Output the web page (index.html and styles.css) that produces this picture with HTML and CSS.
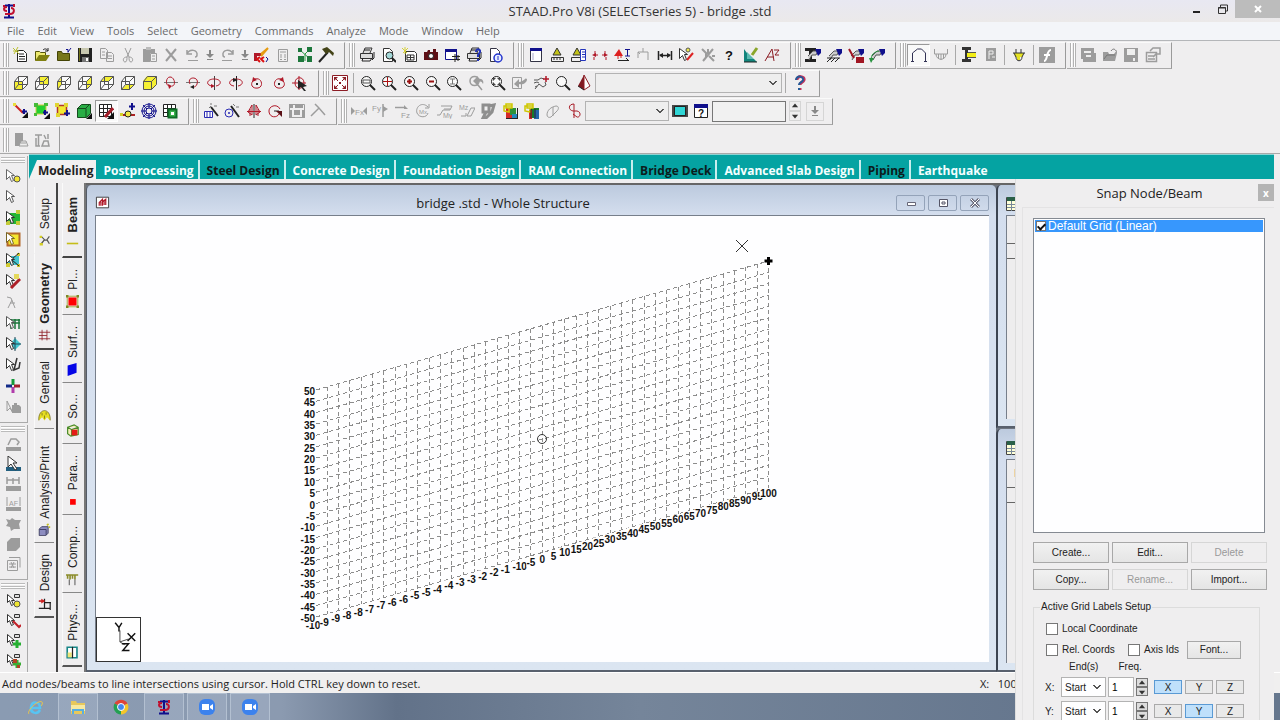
FILE: index.html
```
<!DOCTYPE html>
<html lang="en">
<head>
    <meta charset="UTF-8">
    <meta name="viewport" content="width=device-width, initial-scale=1.0">
    <title>STAAD.Pro V8i (SELECTseries 5) - bridge .std</title>
    <link rel="stylesheet" href="styles.css">
</head>
<body>
    <header class="titlebar">
        <span class="app-icon" data-icon="staad"></span>
        <h1>STAAD.Pro V8i (SELECTseries 5) - bridge .std</h1>
        <div class="window-buttons">
            <button aria-label="Minimize" data-icon="winMin"></button>
            <button aria-label="Restore" data-icon="winRestore"></button>
            <button class="close" aria-label="Close" data-icon="winClose"></button>
        </div>
    </header>

    <nav class="menubar">
        <a href="#">File</a>
        <a href="#">Edit</a>
        <a href="#">View</a>
        <a href="#">Tools</a>
        <a href="#">Select</a>
        <a href="#">Geometry</a>
        <a href="#">Commands</a>
        <a href="#">Analyze</a>
        <a href="#">Mode</a>
        <a href="#">Window</a>
        <a href="#">Help</a>
    </nav>

    <section class="toolbars">
        <div class="toolbar-row">
            <div class="toolbar w345" data-tools="newDoc open closeFile save copy cut paste del undo down redo down check calc nodes hammer"></div>
            <div class="toolbar w168" data-tools="print preview report camera tablePic printQ docQ"></div>
            <div class="toolbar w276" data-tools="win scale scaleDoc dimBeam dimNode frameG dimension selBeam crossG question ruler fontAZ"></div>
            <div class="toolbar w104" data-tools="handBeam handHatch handRed handArc"></div>
            <div class="toolbar w169" data-tools="portal* bucket | ibeam docG | plug | func"></div>
            <div class="toolbar w105" data-tools="saveG openG diskG handG"></div>
        </div>
        <div class="toolbar-row">
            <div class="toolbar w319" data-tools="cubeFront cubeBack cubeLeft cubeRight cubeTop cubeBottom cubeAll rotX rotX2 rotY rotY2 spin spin2 pick"></div>
            <div class="toolbar w500">
                <div class="tools w20" data-tools="fit"></div>
                <div class="tools w245" data-tools="| zoomWin zoomDyn zoomIn zoomOut zoomHalf zoomPrev zoomExt panG pan lens pyramid"></div>
                <select class="view-combo" aria-label="Saved view"><option></option></select>
                <div class="tools w28" data-tools="| help"></div>
            </div>
        </div>
        <div class="toolbar-row">
            <div class="toolbar w189" data-tools="addBeam addPlate addSurface addSolid gridTool* insertNode radial gridPlate"></div>
            <div class="toolbar w147" data-tools="wandGrid wandCircle mirror circRepeat tableG angleG"></div>
            <div class="toolbar w495">
                <div class="tools w237" data-tools="fx fy fz mx my mz platesG stress1 stress2 shapeG sCurve"></div>
                <select class="load-combo" aria-label="Load case"><option></option></select>
                <div class="tools w43" data-tools="monitor helpWin"></div>
                <input class="scale-box" type="text" aria-label="Scale">
                <div class="spin-pair">
                    <button aria-label="Increase" data-icon="up"></button>
                    <button aria-label="Decrease" data-icon="dn"></button>
                </div>
                <button class="apply" aria-label="Apply scale" data-icon="down"></button>
            </div>
        </div>
        <div class="toolbar-row last">
            <div class="toolbar w60" data-tools="docHand toolHand"></div>
        </div>
    </section>

    <div class="work">
        <aside class="side-tools">
            <div class="side-group" data-tools="curNode cur curPlate curSurface curSolid curBeam angle2 curGreen curCyan curHook crossColor curG"></div>
            <div class="side-group" data-tools="sg1 sg2 sg3 sg4 sg5 sg6 sg7"></div>
            <div class="side-group" data-tools="sn1 sn2 sn3 sn4"></div>
        </aside>

        <div class="main">
            <nav class="page-tabs">
                <a class="active" href="#">Modeling</a>
                <a href="#">Postprocessing</a>
                <a class="dark" href="#">Steel Design</a>
                <a href="#">Concrete Design</a>
                <a href="#">Foundation Design</a>
                <a href="#">RAM Connection</a>
                <a class="dark" href="#">Bridge Deck</a>
                <a href="#">Advanced Slab Design</a>
                <a class="dark" href="#">Piping</a>
                <a href="#">Earthquake</a>
            </nav>
            <div class="stage">
                <div class="vtabs outer">
                    <button><span>Setup</span><i data-icon="tSetup"></i></button>
                    <button class="active"><span>Geometry</span><i data-icon="tGeometry"></i></button>
                    <button><span>General</span><i data-icon="tGeneral"></i></button>
                    <button class="tall"><span>Analysis/Print</span><i data-icon="tAnalysis"></i></button>
                    <button class="end"><span>Design</span><i data-icon="tDesign"></i></button>
                </div>
                <div class="vtabs inner">
                    <button class="active"><span>Beam</span><i data-icon="tBeam"></i></button>
                    <button><span>Pl...</span><i data-icon="tPlate"></i></button>
                    <button><span>Surf...</span><i data-icon="tSurf"></i></button>
                    <button><span>So...</span><i data-icon="tSolid"></i></button>
                    <button><span>Para...</span><i data-icon="tPara"></i></button>
                    <button><span>Comp...</span><i data-icon="tComp"></i></button>
                    <button class="end"><span>Phys...</span><i data-icon="tPhys"></i></button>
                </div>

                <div class="mdi">
                    <section class="child view">
                        <header class="child-title">
                            <span class="child-icon" data-icon="structure"></span>
                            <h2>bridge .std - Whole Structure</h2>
                            <div class="child-buttons">
                                <button aria-label="Minimize" data-icon="cMin"></button>
                                <button aria-label="Maximize" data-icon="cMax"></button>
                                <button aria-label="Close" data-icon="cClose"></button>
                            </div>
                        </header>
                        <div class="client">
                            <svg id="grid" viewBox="96 216 893 446" role="img" aria-label="Snap grid"></svg>
                            <svg class="axes" viewBox="0 0 45 45" role="img" aria-label="Axis orientation">
                                <path d="M24 13v12l9-3M24 25l5 3" />
                                <path d="M19 5l4 5l3-5M23 10v4M32 16l8 8M40 16l-8 8M26 27h7l-6 7h7" class="letters" />
                            </svg>
                        </div>
                    </section>
                    <div class="child-stack">
                        <section class="child table-window">
                            <span class="child-icon" data-icon="table"></span>
                            <div class="client"><div class="cell head"></div><div class="cell"></div></div>
                        </section>
                        <section class="child table-window">
                            <span class="child-icon" data-icon="table"></span>
                            <div class="client"><div class="cell head">E</div><div class="cell"></div></div>
                        </section>
                    </div>
                </div>
            </div>
        </div>
    </div>

    <footer class="statusbar">
        <span class="hint">Add nodes/beams to line intersections using cursor. Hold CTRL key down to reset.</span>
        <span class="coords">X:&nbsp;&nbsp; 100</span>
    </footer>

    <nav class="taskbar">
        <button aria-label="Internet Explorer" data-icon="ie"></button>
        <button class="open" aria-label="File Explorer" data-icon="explorer"></button>
        <button aria-label="Chrome" data-icon="chrome"></button>
        <button class="open" aria-label="STAAD.Pro" data-icon="staad"></button>
        <button class="open" aria-label="Zoom" data-icon="zoomApp"></button>
        <button class="open" aria-label="Zoom Meeting" data-icon="zoomApp"></button>
    </nav>

    <section class="dialog">
        <header class="dialog-title">
            <h2>Snap Node/Beam</h2>
            <button aria-label="Close dialog">x</button>
        </header>
        <div class="dialog-body">
            <div class="grid-list">
                <label class="selected"><input type="checkbox" checked>Default Grid (Linear)</label>
            </div>
            <div class="actions">
                <button>Create...</button>
                <button>Edit...</button>
                <button disabled>Delete</button>
                <button>Copy...</button>
                <button disabled>Rename...</button>
                <button>Import...</button>
            </div>
            <fieldset>
                <legend>Active Grid Labels Setup</legend>
                <div class="check-row">
                    <label><input type="checkbox">Local Coordinate</label>
                </div>
                <div class="check-row">
                    <label class="rel"><input type="checkbox">Rel. Coords</label>
                    <label><input type="checkbox">Axis Ids</label>
                    <button class="font-button">Font...</button>
                </div>
                <div class="label-heads"><span>End(s)</span><span>Freq.</span></div>
                <div class="axis-row">
                    <label for="end-x">X:</label>
                    <select id="end-x"><option>Start</option></select>
                    <input type="text" value="1" aria-label="X frequency">
                    <div class="spinner"><button aria-label="More" data-icon="up"></button><button aria-label="Less" data-icon="dn"></button></div>
                    <div class="axis-buttons"><button class="on">X</button><button>Y</button><button>Z</button></div>
                </div>
                <div class="axis-row">
                    <label for="end-y">Y:</label>
                    <select id="end-y"><option>Start</option></select>
                    <input type="text" value="1" aria-label="Y frequency">
                    <div class="spinner"><button aria-label="More" data-icon="up"></button><button aria-label="Less" data-icon="dn"></button></div>
                    <div class="axis-buttons"><button>X</button><button class="on">Y</button><button>Z</button></div>
                </div>
            </fieldset>
        </div>
    </section>

    <script src="script.js"></script>
</body>
</html>
```
FILE: styles.css
```
*,
*::before {
    box-sizing: border-box;
}
body {
    margin: 0;
    height: 100vh;
    overflow: hidden;
    display: flex;
    flex-direction: column;
    background: #efeeef;
    color: #222;
    font-family: "Open Sans", "Noto Sans", sans-serif;
    font-size: 11px;
}
button {
    padding: 0;
    border: 0;
    background: none;
    color: inherit;
    font: inherit;
    display: flex;
    align-items: center;
    justify-content: center;
}
h1,
h2 {
    margin: 0;
    font-weight: normal;
}
a {
    color: inherit;
    text-decoration: none;
}
svg {
    display: block;
}
[data-icon] svg {
    width: 16px;
    height: 16px;
}

/* title bar and menu */
.titlebar {
    display: grid;
    grid-template-columns: 96px 1fr 96px;
    height: 22px;
    flex: none;
    background: linear-gradient(#e8e8f2, #ebe9e9);
}
.app-icon {
    padding: 3px 0 0 1px;
}
.titlebar h1 {
    text-align: center;
    font-size: 13px;
    line-height: 22px;
    color: #333;
}
.window-buttons {
    display: flex;
    justify-content: flex-end;
    height: 18px;
}
.window-buttons button {
    width: 25px;
}
.window-buttons .close {
    width: 45px;
    background: #bcbcbc;
}
.menubar {
    display: flex;
    gap: 13px;
    flex: none;
    height: 19px;
    padding-left: 7px;
    background: #f3f5f9;
    border-bottom: 1px solid #b4b6b9;
    color: #6a6a6a;
    line-height: 18px;
}

/* toolbars */
.toolbars {
    flex: none;
    border-bottom: 1px solid #a9a9a9;
}
.toolbar-row {
    display: flex;
    gap: 1px;
    height: 28px;
    padding-top: 1px;
}
.toolbar {
    display: flex;
    align-items: center;
    height: 27px;
    padding: 0 7px 1px 0;
    border-right: 1px solid #9a9a9a;
    border-bottom: 1px solid #a9a9a9;
    border-top: 1px solid #fafafa;
}
.toolbar-row.last .toolbar {
    border-bottom: 0;
}
.toolbar::before {
    content: "";
    flex: none;
    width: 6px;
    height: 24px;
    margin: 0 1px 0 3px;
    border: solid #b2b2b2;
    border-width: 0 1px;
    background: linear-gradient(90deg, #fff 1px, #efeeef 1px, #efeeef 2px, #b2b2b2 2px, #b2b2b2 3px, #fff 3px);
}
.tools {
    display: flex;
    align-items: center;
    flex: none;
}
.tool {
    flex: 5 1 0;
    min-width: 0;
    height: 22px;
}
.tool.narrow {
    flex-grow: 3;
}
.tool.pressed {
    background: #f9f9f9;
    border: 1px solid;
    border-color: #999 #fff #fff #999;
}
.tool svg {
    flex: none;
}
.sep {
    flex: none;
    width: 1px;
    height: 20px;
    margin: 0 3px;
    background: #a9a9a9;
}
.w345 { width: 345px; }
.w168 { width: 168px; }
.w276 { width: 276px; }
.w104 { width: 104px; }
.w169 { width: 169px; }
.w105 { width: 105px; }
.w319 { width: 319px; }
.w500 { width: 500px; }
.w20 { width: 20px; }
.w28 { width: 28px; }
.w245 { width: 245px; }
.w189 { width: 189px; }
.w147 { width: 147px; }
.w495 { width: 495px; }
.w237 { width: 237px; }
.w43 { width: 43px; }
.w60 { width: 60px; }
select {
    appearance: none;
    background-color: #eee;
    background-image: linear-gradient(45deg, transparent 50%, #555 50%, #555 75%, transparent 75%), linear-gradient(-45deg, transparent 50%, #555 50%, #555 75%, transparent 75%);
    background-size: 4px 5px;
    background-position: right 8px center, right 4px center;
    background-repeat: no-repeat;
    border: 1px solid #b3b3b3;
    border-radius: 0;
    color: #222;
    height: 20px;
}
.view-combo {
    width: 187px;
}
.load-combo {
    width: 84px;
}
.scale-box {
    width: 74px;
    height: 21px;
    border: 1px solid #777;
    background: #f1f1f1;
}
.spin-pair {
    width: 12px;
    margin: 0 5px 0 3px;
}
.spin-pair button {
    width: 100%;
    height: 10px;
    border: 1px solid #d5d5d5;
}
.apply {
    width: 18px;
    height: 19px;
    border: 1px solid #d5d5d5;
}
.spin-pair svg,
.spinner svg {
    width: 10px;
    height: 10px;
}

/* work area */
.work {
    flex: 1;
    min-height: 0;
    display: flex;
}
.side-tools {
    width: 29px;
    flex: none;
    padding-top: 2px;
    overflow: hidden;
}
.side-group {
    display: flex;
    flex-direction: column;
    width: 28px;
    padding-bottom: 5px;
    margin-bottom: 2px;
    border-right: 1px solid #aaa;
    border-bottom: 1px solid #aaa;
}
.side-group::before {
    content: "";
    flex: none;
    width: 24px;
    height: 6px;
    margin: 1px 1px 2px;
    border: solid #bbb;
    border-width: 1px 0;
    background: linear-gradient(#fff 1px, #efeeef 1px, #efeeef 2px, #bbb 2px, #bbb 3px, #fff 3px);
}
.side-group .tool {
    flex: none;
    width: 26px;
    height: 20px;
}
.side-group:first-child .tool {
    height: 21px;
}
.main {
    flex: 1;
    min-width: 0;
    display: flex;
    flex-direction: column;
}
.page-tabs {
    display: flex;
    align-items: flex-end;
    flex: none;
    height: 25px;
    margin-right: 6px;
    background: #05a3a2;
    border-top: 1px solid #8fd3d3;
    color: #f4ffff;
    font-size: 12px;
    font-weight: bold;
}
.page-tabs a {
    height: 19px;
    padding: 0 4px 0 7px;
    border-right: 2px solid #c9eeee;
    line-height: 21px;
    white-space: nowrap;
}
.page-tabs a:last-child {
    border: 0;
}
.page-tabs .dark {
    color: #0c1c1c;
}
.page-tabs .active {
    padding: 0 3px 0 9px;
    border: 0;
    background: #f2f1f1;
    clip-path: polygon(8px 0, 100% 0, 100% 100%, 0 100%);
    color: #222;
}
.stage {
    flex: 1;
    min-height: 0;
    display: flex;
    padding-top: 4px;
}
.vtabs {
    flex: none;
    display: flex;
    flex-direction: column;
    align-items: stretch;
    overflow: hidden;
    border-right: 2px solid #444;
    font-family: "Liberation Sans", sans-serif;
    font-size: 12px;
    line-height: 14px;
}
.vtabs.outer {
    width: 29px;
    padding: 4px 2px 0 5px;
}
.vtabs.inner {
    width: 28px;
    padding: 0 2px 0 4px;
    border-right: 2px solid #777;
}
.vtabs button {
    flex: none;
    flex-direction: column;
    justify-content: flex-end;
    gap: 5px;
    padding: 11px 0 6px;
    border-bottom: 1px solid #888;
    border-left: 1px solid #fafafa;
}
.vtabs.outer button:first-child {
    border-bottom-color: transparent;
}
.vtabs span {
    writing-mode: vertical-rl;
    transform: rotate(180deg);
}
.vtabs button svg {
    width: 13px;
    height: 13px;
}
.vtabs .active {
    padding-top: 9px;
    font-size: 13px;
    font-weight: bold;
    border-bottom: 2px solid #444;
}
.vtabs .tall {
    padding-top: 17px;
}
.vtabs.inner .active {
    padding-top: 14px;
}
.vtabs .end {
    border-bottom: 2px solid #555;
}

/* child windows */
.mdi {
    flex: 1;
    min-width: 0;
    display: flex;
    margin-right: 6px;
    border-top: 2px solid #666;
    background: #6d747f;
}
.child {
    background: linear-gradient(#bccade, #d4deee 30px, #dbe5f1);
    border-left: 1px solid #555c68;
    border-bottom: 2px solid #59616e;
}
.view {
    flex: 1;
    min-width: 0;
    display: flex;
    flex-direction: column;
    padding: 0 7px 8px 8px;
    border-radius: 5px 5px 0 0;
}
.child-title {
    flex: none;
    display: grid;
    grid-template-columns: 15px 1fr 93px;
    align-items: center;
    height: 30px;
    padding-top: 5px;
}
.child-title h2 {
    text-align: center;
    font-size: 13px;
    line-height: 18px;
}
.child-title .child-icon svg {
    width: 15px;
    height: 13px;
}
.child-buttons {
    display: flex;
    gap: 3px;
}
.child-buttons button {
    width: 29px;
    height: 16px;
    border: 1px solid #94a3b9;
    border-radius: 2px;
}
.client {
    background: #fefeff;
    border: solid #777f8b;
    border-width: 1px 0 0 1px;
}
.view .client {
    position: relative;
    flex: 1;
    min-height: 0;
}
#grid {
    width: 100%;
    height: 100%;
}
#grid .lines line {
    stroke: #8c8c8c;
    stroke-dasharray: 4 3;
    shape-rendering: crispEdges;
}
#grid .mark {
    stroke: #333;
    fill: none;
}
#grid .node {
    stroke: #000;
    stroke-width: 3px;
}
#grid rect {
    fill: #fefeff;
}
#grid text {
    font: bold 10px "Liberation Sans", sans-serif;
    fill: #111;
    text-anchor: middle;
}
#grid .end {
    text-anchor: end;
}
.axes {
    position: absolute;
    left: 0;
    bottom: 0;
    width: 45px;
    height: 45px;
    background: #fff;
    border: 1px solid #333;
    fill: none;
    stroke: #444;
}
.axes .letters {
    stroke: #111;
    stroke-width: 1.5;
}
.child-stack {
    width: 278px;
    flex: none;
    display: flex;
    flex-direction: column;
    gap: 1px;
}
.table-window {
    flex: 1;
    display: flex;
    flex-direction: column;
    padding: 11px 0 7px 8px;
    border-left: 2px solid #3c4451;
    border-radius: 5px 0 0 0;
}
.table-window .child-icon {
    height: 19px;
}
.table-window .client {
    flex: 1;
    background: #eeedee;
    font-weight: bold;
}
.cell {
    height: 15px;
    border-bottom: 1px solid #666;
}
.cell.head {
    height: 28px;
    padding: 5px 7px;
}

/* status bar and task bar */
.statusbar {
    flex: none;
    display: flex;
    height: 21px;
    padding: 0 2px;
    line-height: 22px;
    background: #f0efef;
    border-top: 1px solid #fff;
}
.hint {
    width: 978px;
}
.taskbar {
    flex: none;
    display: flex;
    gap: 3px;
    height: 27px;
    padding-left: 15px;
    background: linear-gradient(90deg, #8a9bb2, #8b9ab0 22%, #627289 31%, #75859a 50%, #66778e 80%);
}
.taskbar button {
    width: 40px;
}
.taskbar .open {
    background: rgba(190, 205, 225, 0.25);
    border: 1px solid #b3c0d1;
    border-bottom: 0;
}

/* snap dialog */
.dialog {
    position: absolute;
    top: 179px;
    right: 6px;
    bottom: 0;
    width: 259px;
    overflow: hidden;
    background: #efeeef;
    border-left: 1px solid #ddd;
    font-family: "Liberation Sans", sans-serif;
    font-size: 10px;
}
.dialog-title {
    display: flex;
    height: 28px;
    padding-left: 25px;
    font-family: "Open Sans", "Noto Sans", sans-serif;
}
.dialog-title h2 {
    flex: 1;
    text-align: center;
    font-size: 13px;
    line-height: 28px;
}
.dialog-title button {
    width: 16px;
    height: 17px;
    margin-top: 5px;
    background: #b4b4b4;
    color: #fff;
    font-weight: bold;
    font-size: 10px;
}
.dialog-body {
    margin: 0 0 0 6px;
    padding: 10px 7px 0 10px;
    border: solid #e4e3e4;
    border-width: 1px 0 0 1px;
}
.grid-list {
    height: 315px;
    margin-right: 2px;
    padding: 1px;
    border: 1px solid #858a92;
    background: #fefeff;
}
.dialog label {
    display: flex;
    align-items: center;
    white-space: nowrap;
}
.grid-list .selected {
    height: 12px;
    padding-left: 1px;
    background: #3797fd;
    color: #fff;
    font-size: 12px;
    line-height: 12px;
}
input[type="checkbox"] {
    appearance: none;
    flex: none;
    display: grid;
    place-items: center;
    width: 12px;
    height: 12px;
    margin: 0 4px 0 0;
    border: 1px solid #777;
    background: #fff;
}
.grid-list input[type="checkbox"] {
    width: 10px;
    height: 10px;
    margin-right: 2px;
}
input[type="checkbox"]:checked::before {
    content: "";
    width: 5px;
    height: 8px;
    border: solid #111;
    border-width: 0 2px 2px 0;
    transform: rotate(45deg);
}
.actions {
    display: grid;
    grid-template-columns: repeat(3, 1fr);
    gap: 6px 3px;
    margin-top: 9px;
}
.actions button,
.font-button {
    height: 21px;
    background: linear-gradient(#f1f1f1, #e5e5e5);
    border: 1px solid #a8a8a8;
}
.actions button:disabled {
    border-color: #d6d6d6;
    background: none;
    color: #999;
}
fieldset {
    min-width: 0;
    margin: 11px 7px 0 0;
    padding: 2px 8px 10px 12px;
    border: 1px solid #dcdcdc;
}
legend {
    margin-left: -6px;
    padding: 0 1px;
    line-height: 12px;
}
.check-row {
    display: flex;
    align-items: center;
    height: 21px;
    margin-top: 3px;
}
.check-row + .check-row {
    margin-top: 0;
}
.check-row .rel {
    width: 82px;
}
.font-button {
    width: 54px;
    height: 18px;
    margin-left: auto;
    margin-right: 10px;
}
.label-heads {
    display: flex;
    gap: 20px;
    padding-left: 23px;
    line-height: 14px;
}
.axis-row {
    display: flex;
    align-items: center;
    height: 20px;
    margin: 3px 0 4px -1px;
}
.axis-row label {
    width: 16px;
}
.axis-row select {
    width: 45px;
    padding: 0 3px;
    background-color: #fefeff;
    font: inherit;
}
.axis-row input {
    width: 26px;
    height: 20px;
    margin: 0 2px;
    padding: 0 3px;
    border: 1px solid #b3b3b3;
    font: inherit;
}
.spinner {
    width: 12px;
    margin-right: 6px;
}
.spinner button {
    width: 12px;
    height: 9px;
    background: #ddd;
    border: 1px solid #777;
}
.axis-buttons {
    display: flex;
    gap: 3px;
}
.axis-buttons button {
    width: 28px;
    height: 14px;
    background: #e9e9e9;
    border: 1px solid #aaa;
}
.axis-buttons .on {
    background: #bfe0fb;
    border-color: #5a9ad4;
}
```
FILE: script.js
```
// Small helpers shared by the 16x16 icons
const p = (d, stroke = '#222', fill = 'none', w = 1) =>
    `<path d="${d}" stroke="${stroke}" fill="${fill}" stroke-width="${w}"/>`;
const f = (d, fill = '#222') => `<path d="${d}" fill="${fill}"/>`;
const t = (x, y, s, fill, size = 8) =>
    `<text x="${x}" y="${y}" font-size="${size}" font-family="Liberation Sans, sans-serif" fill="${fill}">${s}</text>`;
const G = '#9c9c9c';
const R = '#b01828';
const N = '#10108c';

const cube = (face) => f('M1 14v-8l4-5h9v9l-5 5z', '#fafafa') + f(face, '#f5f032') + p('M1.5 6.5h8v8h-8zM1.5 6.5l4-5h9l-5 5M14.5 1.5v8l-5 5M5.5 1.5v8h9M5.5 9.5l-4 5', '#555');
const lens = (inner = '') => `<circle cx="6.5" cy="6.5" r="5" stroke="#222" fill="#fafafa"/>` + p('M10 10l5 5', '#222', 'none', 2) + inner;
const cursor = (c = '#333') => p('M1.500 1.500v10l3-3l2 5l2-1l-2-5h3z', c, '#fff');
const hand = p('M3 9l5-5h5l-2 4h-4l-3 5', '#555', '#ccc') + f('M10 2h6v4l-3 3z', N);
const print = p('M4 6l2-5h7l-2 5M1.500 6.500h12v5h-12z', '#333', '#ddd') + p('M4 11l-1 3h8l2-3M5 3h6M15 5v6l-2 2');
const paper = (c = '#333', fill = '#fff') => p('M3.500 1.500h6l3 3v10h-9z', c, fill);
const smallCursor = p('M2.500 1.500v8l2-2l2 5l2-1l-2-4h3z', '#333', '#fff');
const bar = p('M9.500 1.500h5v3h-5z', '#333', '#ddd');

const icons = {
    staad: p('M4 2.500h8M3 14.500h10M8 1v13', N, 'none', 2) + p('M6 4c-4 0-4 4 0 4M10 5c4 0 4 6-1 6h-5M3 2v2M13 1v3', '#c01030', 'none', 2),
    winMin: f('M3 10h7v2h-7z'),
    winRestore: p('M3.500 6.500h7v6h-7zM5.500 6v-2h7v6h-2M3 7h8', '#333'),
    winClose: p('M5 5l6 6M11 5l-6 6', '#fff', 'none', 2),
    cMin: p('M4.500 7.500h8v3h-8z', '#667', '#fff'),
    cMax: p('M4.500 4.500h8v7h-8zM7 7h3v2h-3z', '#556', '#fff'),
    cClose: p('M4 4l8 8M12 4l-8 8', '#667', 'none', 3) + p('M4 4l8 8M12 4l-8 8', '#fff'),
    structure: p('M.5 1.500h15v13h-15z', '#222', '#fff') + p('M4 12v-4l4-4v8M8 7l4-3v7M10 11v-5M6 12v-5', R, 'none', 1.500),
    table: p('M.5 1.500h15v13h-15z', '#444', '#ffffd8') + f('M1 1h15v4h-15z', '#2a6048') + p('M1 8.500h15M1 11.500h15M5.500 5v10M10.500 5v10', '#789'),

    newDoc: p('M4.500 3.500h6l3 3v8h-9z', '#222', '#fff') + p('M6 7h5M6 9.500h6M6 12h6') + p('M0 1l6 6M5 0l-4 7M0 4h6', '#b9bf30'),
    open: p('M1.500 13.500v-9h4l1 1h5v3', '#55550a', '#eeea70') + f('M1 14l4-6h11l-4 6z', '#808010') + p('M9 3c2-2 4-1 5 1M14 1v3h-3'),
    closeFile: p('M1.500 13.500v-9h4l1 2h7v7z', '#444405', '#77771a') + p('M10 2.500h2v3M12 5l3-4', N),
    save: f('M1 1h14v14h-14z') + f('M4 1h8v6h-8z', '#c8c8b0') + f('M2 1h1v13h-1z', '#74741a') + f('M5 10h7v5h-7z', '#777') + f('M9 11h2v3h-2z', '#fff'),
    copy: p('M1.500 1.500h5l2 2v8h-7zM7.500 5.500h5l2 2v7h-7zM3 5h3M3 8h3M9 9h4M9 11.500h4', G),
    cut: p('M5 1l4 9M11 1l-4 9', G) + p('M7 10c-5 0-4 5-2 5s2-3 2-5M9 10c5 0 4 5 2 5s-2-3-2-5', G),
    paste: f('M1 2h12v4h-5v9h-7z', G) + p('M8.500 6.500h6v8h-6zM10 9h3M10 12h3', G, '#eee') + f('M4 0h5v3h-5z', '#bbb'),
    del: p('M3 2l10 12M13 2l-10 12', G, 'none', 2),
    undo: p('M2 3v4h5M2 7c3-6 11-4 10 1c0 1-1 2-2 2', G, 'none', 1.500) + p('M3 13.500h10', G, 'none', 1),
    redo: p('M14 3v4h-5M14 7c-3-6-11-4-10 1c0 1 1 2 2 2', G, 'none', 1.500) + p('M3 13.500h10', G),
    down: f('M7 3h2v4h3l-4 4l-4-4h3zM5 12h6v1h-6z', '#888'),
    up: f('M8 4l5 6h-10z', '#333'),
    dn: f('M3 6h10l-5 6z', '#333'),
    check: f('M0 6h7v3h-4v5h-3z', R) + p('M14 1l-7 8M14 1l-7 6', '#e69b10', 'none', 2) + p('M6 10l-3 2l3 3M10 10l-3 2l3 3', '#d11', 'none', 2) + p('M12 10l2 2l-2 3', N),
    calc: p('M3.500 2.500h9v12h-9zM5 5h6M5 8h2M9 8h2M5 10h2M9 10h2M5 12.500h2M9 12.500h2', G),
    nodes: p('M3 3l10 9M8 7l5-5M8 7v7', '#2c9b45') + f('M1 1h4v4h-4zM10 0h5v5h-5zM1 9h6v6h-6zM10 9h5v6h-5z', '#1d783c'),
    hammer: p('M10 5l-9 10', '#222', 'none', 2) + f('M4 2l5-2l7 6l-1 3l-4-4l-3 2z', '#444418'),
    print,
    preview: paper() + `<circle cx="9.500" cy="8.500" r="3.500" stroke="#222" fill="#a4d8d8"/>` + p('M12 11l4 4', '#222', 'none', 2),
    report: p('M3.500 4.500h9l2 2v8h-11zM5 8h7v5h-7zM5 10.500h7M8.500 8v5', '#333', '#fff') + p('M0 1l5 5M6 1l-5 5M3 0v7', '#d6d038'),
    camera: f('M1 5h3l1-2h2v2h3v-3h3v3h2v8h-14z', '#5e1016') + `<circle cx="8" cy="9" r="2.500" fill="#fff" stroke="#222"/>`,
    tablePic: p('M1.500 2.500h11v10h-11z', N, '#fff') + f('M1 2h12v3h-12z', N) + p('M8 9.500h8M8 12.500h8M11 7v8M14 8v6', '#222'),
    printQ: print + p('M10 5c0-4 5-3 4 0l-2 3v2M12 12v2', '#2233bb', 'none', 2),
    docQ: paper('#334') + `<circle cx="11" cy="11" r="4" fill="#e7edff" stroke="#2233cc" stroke-width="1.500"/>` + p('M11 9v4', '#23c'),
    win: p('M2.500 1.500h11v13h-11z', '#334', '#fff') + f('M2 1h12v3h-12z', N) + p('M5 6v7', '#aac'),
    scale: f('M8 1l4 7h-8z', '#c2c218') + p('M8 1l4 7h-8zM2.500 10.500h12v4h-12zM5 10v3M8 10v3M11 10v3', '#333'),
    scaleDoc: f('M6 1l4 7h-8z', '#c2c218') + p('M6 1l4 7h-8zM.5 10.500h9v4h-9z', '#333') + p('M9.500 2.500h5v11h-5zM11 5h3M11 7.500h3M11 10h3', '#2233bb', '#fff'),
    dimBeam: p('M3 4v3M13 4v3M2 10v3M14 10v3', R) + p('M2 8h4M10 8h4', R) + f('M0 8l4-2v4zM16 8l-4-2v4z', R),
    dimNode: f('M0 9l5-7l4 7z', '#dd2020') + p('M4 9v3M7 8v3', '#d22') + p('M11 2.500h5M13.500 2v7M11 9h5', N) + p('M4 13.500h11M12 11l3 3', '#222'),
    frameG: p('M3 5h10v8M3 5l2 2M3 5v6M8 1v4', G),
    dimension: p('M1.500 4v9M14.500 4v9M3 8.500h10', '#222', 'none', 1.500) + f('M2 8l4-2v5zM14 8l-4-2v5z'),
    selBeam: cursor() + p('M15 6l-6 7', '#d22', 'none', 2) + `<circle cx="10" cy="3" r="2" fill="#eee84c" stroke="#555"/>`,
    crossG: p('M13 2l-10 12M2 2l4 4v4M8 2v5M12 9h3M9 9l5 5', G, 'none', 2),
    question: t(4, 13, '<tspan font-weight="bold">?</tspan>', '#111', 13),
    ruler: f('M1 2v13h13l-3-3h-7v-6z', '#12847b') + f('M4 5v7h7z', '#5ab9b0') + p('M14 1l-5 7', '#8aa62b', 'none', 3) + p('M1 15h13', '#222'),
    fontAZ: p('M1 14l7-12l2 12M3 10h7M10 3h5l-4 5h4', '#8c1d25'),
    handBeam: f('M0 1h11v3h-4v8h4v3h-11v-3h4v-8h-4z') + hand,
    handHatch: hand + p('M1 11h13M1 15l4-4M5 15l4-4M9 15l4-4'),
    handRed: hand + p('M1 2l5 9M9 11h6v4h-6z', '#a01522', '#a01522', 2),
    handArc: hand + p('M2 14c0-7 3-9 8-10', '#299340') + f('M0 11h5l-3 5z', '#299340'),
    portal: p('M1.500 14v-8l5-4h4l4 4v8M0 14.500h3M13 14.500h3', '#335', 'none', 1),
    bucket: p('M1.500 2v5h13v-5M3 7c0 7 10 7 10 0M5.500 7v5M8 7v6M10.500 7v5', G),
    ibeam: f('M1 0h9v3h-3v9h3v3h-9v-3h3v-9h-3z', '#333') + p('M7 5.500h8M7 10.500h8', '#555', 'none', 1) + f('M6 6h9v4h-9z', '#f3ee18'),
    docG: f('M3 1h10v13h-10z', G) + p('M6 4h4v3h-4zM6 7v5M9 10h3', '#eee'),
    plug: f('M3 6h10l-2 4h-2v3h-3v-3h-2z', '#e6e323') + p('M2 6h12M3 6l2 4c0 5 6 5 6 0l2-4M5 2v4M10 2v4', '#333'),
    func: f('M0 0h16v16h-16z', G) + p('M5 14c4 0 2-11 7-11M5 8h6', '#fff', 'none', 2),
    saveG: f('M1 1h13v5h2v9h-13v-3h-2z', G) + f('M4 4h7v2h-7zM6 8h5v2h-5z', '#eee'),
    openG: f('M1 14v-9h5l1 2h5l3-4v3l-2 8z', G) + p('M9 4c2-3 4-2 5 0M2 12l3-4h8', '#777'),
    diskG: f('M1 1h14v14h-14z', G) + f('M4 2h8v6h-8zM10 11h2v3h-2z', '#eee'),
    handG: p('M1.500 5.500h10v9h-10zM3 9h7M3 12h7M5 4l3-3h7v6h-4l-3 3', G, 'none', 1.500),

    cubeFront: cube('M2 7h7v7h-7z'),
    cubeBack: cube('M6 2h8v7h-8z'),
    cubeLeft: cube('M2 7l4-5v7l-4 5z'),
    cubeRight: cube('M10 6l4-4v7l-4 5z'),
    cubeTop: cube('M2 6l4-4h8l-4 4z'),
    cubeBottom: cube('M2 14l4-4h8l-4 4z'),
    cubeAll: f('M1 14v-8l4-5h9v9l-5 5z', '#f5f032') + p('M1.500 6.500h8v8h-8zM1.500 6.500l4-5h9l-5 5M14.500 1.500v8l-5 5', '#555'),
    rotX: p('M1 7.500h14', '#777') + p('M6 11c-4-1-3-9 1-9c5 0 6 9 2 9', R) + f('M5 9l4 2l-3 3z', R),
    rotX2: p('M1 7.500h14', '#777') + p('M5 9c-4-8 10-8 7 0c-1 3-3 3-4 3', R) + f('M9 10v4l-4-2z', '#222'),
    rotY: p('M8.500 1v14', '#444') + p('M6 11c-7-1-5-7 2-7c8 0 8 6 2 7', R) + f('M5 9l4 2l-4 2z', R),
    rotY2: p('M8.500 1v14', '#222') + p('M6 11c-7-1-5-7 2-7c8 0 8 6 2 7', R) + f('M5 3l5 2l-5 2z'),
    spin: p('M6 4c7-2 9 8 3 9c-6 1-8-4-5-7', R) + f('M4 2l4 3l-5 2z', R) + f('M7 8h2v2h-2z'),
    spin2: p('M10 4c-7-2-9 8-3 9c6 1 8-4 5-7', R) + f('M12 2l-4 3l5 2z', R) + f('M7 8h2v2h-2z'),
    pick: p('M7 1v14M0 8h14M3 8c0-7 9-7 9 0s-9 7-9 0', R) + f('M6 5l9 6l-4 1l3 4h-2l-3-4l-3 2z'),
    fit: p('M.5.5h15v15h-15z', '#8c1d25', '#fff') + p('M3 3l3 3M13 3l-3 3M3 13l3-3M13 13l-3-3', '#8c1d25') + f('M2 2h4l-4 4zM14 2v4l-4-4zM2 14v-4l4 4zM14 14h-4l4-4zM7 7h2v2h-2z', '#8c1d25'),
    zoomWin: lens(p('M3 5h7v3h-7z', '#555')),
    zoomDyn: lens(p('M2 6.500h9M6.500 2v9', '#a11')),
    zoomIn: lens(p('M4 6.500h5M6.500 4v5', '#911', 'none', 2)),
    zoomOut: lens(p('M4 6.500h5', '#911', 'none', 2)),
    zoomHalf: lens(p('M4 4h5M4 9h5M6.500 4v5', '#777')),
    zoomPrev: p('M11 6c0-6-9-6-9 0s9 6 9 0M10 10l4 5', G, 'none', 1.500) + f('M5 6l5-5v3c5-1 6 3 5 5c-1-3-3-3-5-2v4z', G),
    zoomExt: lens(f('M3 3h3l-3 3zM10 3v3l-3-3zM3 10v-3l3 3zM10 10h-3l3-3z', '#444')),
    panG: p('M1.500 2.500h9v11h-9z', G) + f('M3 9l5-5v3c6-1 6-5 8-3c0 4-4 6-8 5v4z', G),
    pan: p('M1 5h4l3-2l3 1M1 8l3-1l2 1M2 14l4-5l4 3l3-2l-1-3M4 11l-2 1', '#555') + p('M13 1v6M10 4h6', R, 'none', 1.500),
    lens: lens(),
    pyramid: f('M8 0l-6 11l6 4z', '#811820') + p('M8 0l6 11l-6 4z', '#8c1d25', '#fff') + p('M2 11l6 4'),
    help: p('M5 5c0-5 8-4 7 0c-1 3-4 2-4 5M8 13v2', '#c3305b', 'none', 3) + p('M4 5c0-5 8-4 7 0c-1 3-4 2-4 5M7 13v2', '#245a98', 'none', 2),

    addBeam: p('M2 2l8 8', '#c22', 'none', 2) + f('M0 0h3v3h-3z', '#e8dd3a') + p('M11 6v5M9 8.500h5', N, 'none', 2) + f('M15 9v6h-6z', '#111'),
    addPlate: p('M2 2h10v9h-10z', '#d0cc42', '#24cf30') + f('M0 0h4v4h-4zM10 0h4v3h-4zM0 10h3v3h-3z', '#45bb38') + p('M11 7v5M9 9.500h5', N, 'none', 2) + f('M16 10v6h-6z', '#111'),
    addSurface: p('M2.500 2.500h9v9h-9z', '#b3362b', '#f2e832', 1.500) + f('M0 0h4v4h-4zM9 0h4v4h-4zM1 10h4v4h-4z', '#e1d632') + p('M12 7v6M9 10.500h6', N, 'none', 2),
    addSolid: p('M1.500 5.500l4-4h9v9l-4 4h-9zM1 5.500h9v9M10 5l4-4', '#154c1d', '#29ad45') + f('M16 10v6h-6z', '#111'),
    gridTool: p('M1.500 1.500h12v12h-12zM5.500 1v13M9.500 1v13M1 5.500h13M1 9.500h13', '#222', '#fff') + p('M15 5l-8 9', '#a31c28', 'none', 3) + f('M16 9v7h-7z', '#111'),
    insertNode: p('M0 12h5M10 12h5', '#a22', 'none', 2) + `<circle cx="8" cy="11" r="3" fill="#f0e742" stroke="#222"/>` + p('M12 0v7M9 3.500h6', N, 'none', 2) + f('M0 10h3v3h-3z', '#d4ce25'),
    radial: `<circle cx="8" cy="8" r="7" stroke="${N}" fill="none"/><circle cx="8" cy="8" r="3" stroke="${N}" fill="none"/><circle cx="8" cy="8" r="5" stroke="${N}" fill="none"/>` + p('M8 0v5M8 11v5M0 8h5M11 8h5M2 2l4 4M10 10l4 4M14 2l-4 4M2 14l4-4', N),
    gridPlate: p('M1.500 1.500h12v12h-12zM5.500 1v12M9.500 1v12M1 5.500h12M1 9.500h12', '#222', '#fff') + p('M6.500 6.500h8v8h-8z', '#0c6c25', '#38b24c', 2) + f('M9 9h3v3h-3z', '#fff'),
    wandGrid: p('M1.500 8.500h8v6h-8zM4 8v6M7 8v6', '#2a2ab3', '#fff') + p('M8 4l7 9', '#222', 'none', 2) + p('M6 5l2-2M8 0v2M11 3h3', '#777'),
    wandCircle: `<circle cx="5" cy="10" r="4" fill="none" stroke="#2a2ab3"/><circle cx="5" cy="10" r="1" fill="#2a2ab3"/>` + p('M7 3l8 11', '#222', 'none', 2) + p('M9 1l2 2M12 4h3', '#777'),
    mirror: p('M8 1v14', '#222', 'none', 1) + p('M6 2v10l-4-3zM10 2v10l4-3zM1 8.500h14M4 6v7M12 6v7', R),
    circRepeat: p('M13 6c-3-6-12-3-11 3c1 6 8 6 10 2', R) + p('M7 8h5', '#222') + f('M9 8h6v6z', '#5a1016'),
    tableG: f('M0 1h4v4h-4zM6 1h8v4h-8zM0 7h3v8h-3zM5 7h6v5h-6zM13 7h3v8h-3z', G) + p('M.5 1.500h15v13h-15z', G),
    angleG: p('M1 13l8-8l6 7M9 5l-4-4', G, 'none', 1.500),
    fx: f('M0 4l4 4l-4 4zM16 4l-4 4l4 4z', G) + t(4, 12, 'Fx', G),
    fy: t(0, 8, 'Fy', G) + p('M11 1v13', G, 'none', 1.500) + f('M11 3l5 3l-5 3z', G),
    fz: p('M1 4.500h10', G, 'none', 1.500) + f('M10 2l4 4h-4z', G) + t(7, 15, 'Fz', G),
    mx: p('M13 4c-6-6-13 0-11 6c2 5 10 5 11 0M14 1v4h-4', G) + t(4, 11, 'Mx', G, 6),
    my: p('M4 3h11l-2 4h-7l-3 5h-3M7 6h6', G) + t(6, 15, 'My', G, 7),
    mz: t(0, 7, 'Mz', G, 7) + p('M2 13h5v-3M8 13l4-8h4l-4 8z', G),
    platesG: p('M3 2h6v7h-6zM9 3l5-1l-2 7l-6 6h-3l3-6', '#8e8e8e', 'none', 3),
    stress1: f('M4 5h10v10h-10z', '#d42b28') + f('M8 5h6v7h-6z', '#2c9138') + f('M10 11h5v4h-5z', '#28b') + p('M4 1h6v4h-6zM7 5v4l-5-1v-5h8', '#cfc700', 'none', 1.500) + p('M4 15.500h12M15.500 5v10'),
    stress2: f('M8 5h8v10h-8z', '#167a2c') + f('M6 7h3v9h-3z', '#d42b28') + f('M11 7h5v9h-5z', '#26a') + p('M4 1h6v4h-6zM7 5v4l-5-1v-5h8', '#cfc700', 'none', 1.500) + p('M8 6v9M12 6v9'),
    shapeG: p('M2 12c0-5 4-8 9-9c3 0 3 3 1 5l-6 6c-2 1-4 0-4-2zM8 4v9', G),
    sCurve: p('M8 1c-6 0-6 6-1 7h4c5 1 3 7 0 6l-4-3M8 1v14', '#a91d28'),
    monitor: f('M0 2h16v12h-16z', '#484848') + f('M3 4h10v8h-10z', '#30d5d5') + p('M2.500 3.500h11v9h-11z'),
    helpWin: p('M1.500 1.500h13v13h-13z', '#222', '#fff') + f('M1 1h14v4h-14z', N) + t(5, 14, '<tspan font-weight="bold">?</tspan>', '#111', 10),
    docHand: f('M2 1h8v13h-8z', G) + p('M6 14l2-5h5l2 5zM8 11h5', G, '#eee'),
    toolHand: p('M1 3h7M4.500 3v11M2 6v8h4M8 14l2-5h4l1 5zM10 3l2 4M14 2v5', G, 'none', 1.500),

    curNode: cursor('#666') + `<circle cx="12" cy="11" r="3" fill="#f2e634" stroke="#555"/>`,
    cur: cursor('#555'),
    curPlate: f('M3 3h12v11h-12z', '#23b633') + f('M11 0h4v4h-4zM1 11h4v4h-4zM11 11h4v4h-4z', '#c2ca38') + cursor(),
    curSurface: p('M2.500 2.500h12v12h-12z', '#b4682a', '#f4e730', 2) + cursor('#766523'),
    curSolid: f('M3 4h11v9h-11z', '#42c4cf') + f('M12 1h3v3h-3zM1 11h4v4h-4zM12 12h3v3h-3z', '#d1cb32') + p('M7 7l7-6M7 8l7 6') + cursor(),
    curBeam: cursor() + p('M15 6l-9 9', '#ad2028', 'none', 3) + f('M9 1h5v5h-5z', '#e4d95c'),
    angle2: p('M2 3l4 1l4 10M7 6l-4 8M5 9h5', G),
    curGreen: p('M4 5h11M4 8h11M6 4v10M10 4v10M14 4v10', '#1d783c', 'none', 1.500) + cursor('#555'),
    curCyan: f('M10 2l6 6l-6 6l-5-6z', '#45cad4') + p('M10 1v14M4 8h12', '#245') + cursor(),
    curHook: cursor() + p('M12 1l-3 12l5-2l1-6', '#333', 'none', 1.500),
    crossColor: p('M8 1v6', '#159a3a', 'none', 3) + p('M8 9v6', '#b13cab', 'none', 3) + p('M1 8h6', '#112a88', 'none', 3) + p('M9 8h6', '#a31d2a', 'none', 3),
    curG: p('M2 2v10l3-3l3 5z', G) + f('M7 6h2v-2h3v2h2l2 2v6h-9z', G),
    sg1: f('M1 11h15v4h-15z', G) + p('M3 9l3-6h5l3 3l-2 3', G, 'none', 1.500),
    sg2: f('M1 11h15v4h-15z', '#235f7f') + p('M3 0v11l3-3l4 6l2-1l-4-6h4z', '#333', '#fff'),
    sg3: f('M1 10h15v5h-15z', G) + p('M2 1v7M14 1v7M2 4h12M8 2v6', G, 'none', 1.500),
    sg4: f('M1 11h15v4h-15z', G) + p('M2 1v9M15 1v9', G) + t(4, 10, 'AF', G, 7),
    sg5: f('M1 3l4 1l2-2l3 2h6l-2 4l1 5h-6l-3 2l-1-4l-4-1l2-3z', G),
    sg6: f('M2 6l4-4h9v9l-4 4h-9z', G),
    sg7: p('M2.500 4.500h10v10h-10zM4 1.500h11v10M4 8h7M4 11h7', G) + p('M6 6l3 6M9 6l-3 6', G),
    sn1: smallCursor + bar + `<circle cx="12" cy="11" r="3" fill="#efe532" stroke="#555"/>`,
    sn2: smallCursor + bar + p('M8 8l6 6l2-2', '#c3222a', 'none', 2),
    sn3: smallCursor + bar + p('M12 7v8M8 11h8', '#26af32', 'none', 3),
    sn4: smallCursor + bar + p('M12 7v8M8 11h8', '#3aad34', 'none', 3) + f('M8 6h4v4h-4zM12 12h3v3h-3z', '#b04424'),

    tSetup: p('M4 3l4 4l-4 5M8 7.500h4M14 3l-3 4l3 5', '#555', 'none', 1.500) + f('M2 2h3v3h-3zM2 11h4v3h-4z', '#d3cd24'),
    tGeometry: p('M1 4h14M1 12h14M5 1v13M11 1v13M1 8h10', '#8c1d25'),
    tGeneral: f('M1 14c-1-16 15-16 14 0l-4-4l-3 4l-3-4z', '#e6df22') + p('M1 14c-1-16 15-16 14 0M5 5v3M10 4v3M8 8v4', '#776f20'),
    tAnalysis: p('M1.500 7.500l3-3h8v8l-3 3h-8zM2 8h8v7', '#335', '#8d8dc0') + p('M11 3l2-2M13 5h2', '#c2bd24', 'none', 2),
    tDesign: p('M8 7h8M8 2v12M1 14h14M15 7v9', '#222', 'none', 1.500) + p('M1 5h6', '#c22', 'none', 2) + f('M4 2l5 3l-5 3z', '#c22'),
    tBeam: p('M1 8h14', '#c5bd19', 'none', 2),
    tPlate: p('M1.500 1.500h13v13h-13z', '#9a9d25') + f('M3 3h10v10h-10z', '#f00') + f('M0 0h3v3h-3zM13 0h3v3h-3zM0 13h3v3h-3zM13 13h3v3h-3z', '#7c8825'),
    tSurf: f('M2 3l11-3v12l-11 4z', '#0505e6'),
    tSolid: p('M2 4l8-3l5 3v9l-9 2l-4-3zM2 4l5 3l8-3M7 7v8', '#4a8c29', '#f4edb8', 1.500) + f('M7 7h7v7h-7z', '#e51b16'),
    tPara: f('M5 5h7v7h-7z', '#f00'),
    tComp: p('M0 2.500h15M2 3v4M5 3v5M8 3v4M11 3v5', '#8b8c2a', 'none', 2) + p('M4 8v7M11 8v7', '#333'),
    tPhys: p('M1.500 1.500h12v13h-12z', '#188788', '#fff', 2) + f('M2 8h5v6h-5z', '#eee579') + p('M8 1v14', '#222', 'none', 1.500),

    ie: p('M13 11c-3 5-10 3-9-3s9-6 9 1h-9', '#58c4f2', 'none', 2.500) + p('M2 15c-3-3 10-15 13-12c1 1 0 3-1 4', '#e6c650'),
    explorer: f('M1 2h5l1 2h8v11h-14z', '#e8c85b') + f('M1 6h14v6h-14z', '#f8e9a0') + p('M3 15v-4h10v4', '#58aee0', 'none', 2),
    chrome: f('M8 8l-6.500-3.500a7.500 7.500 0 0 1 13 0z', '#df4437') + f('M8 8l6.500-3.500a7.500 7.500 0 0 1-6.500 11z', '#f5c628') + f('M8 8v7.500a7.500 7.500 0 0 1-6.500-11z', '#24a052') + `<circle cx="8" cy="8" r="3.500" fill="#4389ef" stroke="#fff"/>`,
    zoomApp: '<rect width="16" height="16" rx="6" fill="#3c82ed"/>' + f('M3 5h7v6h-7zM11 7l3-2v6l-3-2z', '#fff')
};

function drawIcon(el, name) {
    el.innerHTML = `<svg viewBox="0 0 16 16" fill="none" aria-hidden="true">${icons[name]}</svg>`;
}

document.querySelectorAll('[data-icon]').forEach(el => drawIcon(el, el.dataset.icon));

// Fill the toolbars: "|" is a separator, a trailing * is a pressed button
document.querySelectorAll('[data-tools]').forEach(bar => {
    bar.dataset.tools.split(' ').forEach(name => {
        if (name === '|') {
            const sep = document.createElement('span');
            sep.className = 'sep';
            bar.appendChild(sep);
            return;
        }
        const pressed = name.endsWith('*');
        const key = name.replace('*', '');
        const button = document.createElement('button');
        button.className = 'tool' + (pressed ? ' pressed' : '') + (key === 'down' ? ' narrow' : '');
        button.dataset.icon = key;
        button.setAttribute('aria-label', key);
        drawIcon(button, key);
        bar.appendChild(button);
    });
});

// Snap grid: 40 bays along X, 20 along Y, drawn in skewed projection
const grid = { left: 316, right: 768.5, top: 390, rise: 129, height: 227 };
const colX = i => grid.left + (grid.right - grid.left) * i / 40;
const topY = i => grid.top - grid.rise * i / 40;

let lines = '';
for (let i = 1; i <= 40; i++) {
    lines += `<line x1="${colX(i)}" y1="${topY(i)}" x2="${colX(i)}" y2="${topY(i) + grid.height}"/>`;
}
for (let j = 0; j <= 20; j++) {
    const dy = grid.height * j / 20;
    lines += `<line x1="${grid.left}" y1="${grid.top + dy}" x2="${grid.right}" y2="${topY(40) + dy}"/>`;
}

let labels = '';
for (let i = 0; i <= 40; i++) {
    const value = -100 + i * 5;
    const text = value === -100 ? '-10' : value < -10 ? String(value).slice(0, 2) : String(value);
    const width = text.replace('-', '').length * 6 + (value < 0 ? 3 : 0);
    const x = value < -10 ? colX(i) - 3 : colX(i);
    const y = 625 - 132 * i / 40;
    labels += `<rect x="${x - width / 2}" y="${y - 5}" width="${width}" height="10"/>`;
    labels += `<text x="${x}" y="${y + 4}">${text}</text>`;
}
for (let j = 0; j <= 20; j++) {
    const y = 391 + grid.height * j / 20;
    labels += `<rect x="298" y="${y - 5}" width="17" height="10"/>`;
    labels += `<text class="end" x="315" y="${y + 4}">${50 - j * 5}</text>`;
}

document.getElementById('grid').innerHTML =
    `<g class="lines">${lines}</g>${labels}` +
    '<circle class="mark" cx="542" cy="439" r="4.500"/>' +
    '<path class="mark" d="M736 240l12 12M748 240l-12 12"/>' +
    '<path class="node" d="M764.500 261h8M768.500 257v8"/>';
```
